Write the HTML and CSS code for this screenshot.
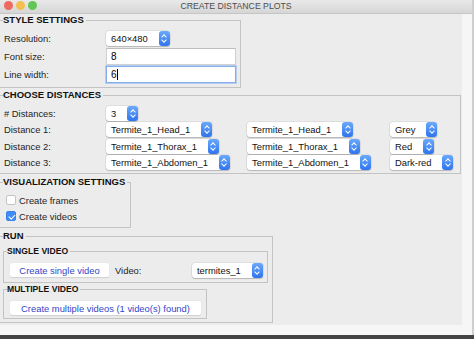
FILE: index.html
```html
<!DOCTYPE html>
<html lang="en">
<head>
    <meta charset="UTF-8">
    <title>Create Distance Plots</title>
    <link rel="stylesheet" href="styles.css">
</head>
<body>
    <div class="window">
        <div class="titlebar">
            <div class="lights">
                <span class="light red"></span>
                <span class="light yellow"></span>
                <span class="light green"></span>
            </div>
            <div class="title">CREATE DISTANCE PLOTS</div>
        </div>
        <div class="body">
            <div class="content">
                <fieldset class="frame style-frame">
                    <legend>STYLE SETTINGS</legend>
                    <div class="row">
                        <label>Resolution:</label>
                        <span class="popup"><span class="value">640×480</span><span class="arrow"></span></span>
                    </div>
                    <div class="row">
                        <label>Font size:</label>
                        <div class="entry">8</div>
                    </div>
                    <div class="row last">
                        <label>Line width:</label>
                        <div class="entry focused">6<span class="caret"></span></div>
                    </div>
                </fieldset>

                <fieldset class="frame dist-frame">
                    <legend>CHOOSE DISTANCES</legend>
                    <div class="dist-grid">
                        <label># Distances:</label>
                        <span class="cell"><span class="popup"><span class="value">3</span><span class="arrow"></span></span></span>
                        <span></span>
                        <span></span>

                        <label>Distance 1:</label>
                        <span class="cell"><span class="popup"><span class="value">Termite_1_Head_1</span><span class="arrow"></span></span></span>
                        <span class="cell"><span class="popup"><span class="value">Termite_1_Head_1</span><span class="arrow"></span></span></span>
                        <span class="cell"><span class="popup"><span class="value">Grey</span><span class="arrow"></span></span></span>

                        <label>Distance 2:</label>
                        <span class="cell"><span class="popup"><span class="value">Termite_1_Thorax_1</span><span class="arrow"></span></span></span>
                        <span class="cell"><span class="popup"><span class="value">Termite_1_Thorax_1</span><span class="arrow"></span></span></span>
                        <span class="cell"><span class="popup"><span class="value">Red</span><span class="arrow"></span></span></span>

                        <label>Distance 3:</label>
                        <span class="cell"><span class="popup"><span class="value">Termite_1_Abdomen_1</span><span class="arrow"></span></span></span>
                        <span class="cell"><span class="popup"><span class="value">Termite_1_Abdomen_1</span><span class="arrow"></span></span></span>
                        <span class="cell"><span class="popup"><span class="value">Dark-red</span><span class="arrow"></span></span></span>
                    </div>
                </fieldset>

                <fieldset class="frame viz-frame">
                    <legend>VISUALIZATION SETTINGS</legend>
                    <div class="check-row"><span class="check"></span>Create frames</div>
                    <div class="check-row"><span class="check checked"></span>Create videos</div>
                </fieldset>

                <fieldset class="frame run-frame">
                    <legend>RUN</legend>
                    <fieldset class="frame sub single">
                        <legend>SINGLE VIDEO</legend>
                        <div class="single-row">
                            <button class="btn single-btn">Create single video</button>
                            <label class="video-label">Video:</label>
                            <span class="popup"><span class="value">termites_1</span><span class="arrow"></span></span>
                        </div>
                    </fieldset>
                    <fieldset class="frame sub multiple">
                        <legend>MULTIPLE VIDEO</legend>
                        <button class="btn multi-btn">Create multiple videos (1 video(s) found)</button>
                    </fieldset>
                </fieldset>
            </div>
            <div class="edge"></div>
        </div>
        <div class="foot"></div>
    </div>
</body>
</html>
```

FILE: styles.css
```css
html {
    background: linear-gradient(#cfcfcf 335px, #454545 335px);
}
body {
    margin: 0;
    width: 474px;
    height: 339px;
    overflow: hidden;
    font-family: 'Liberation Sans', Arial, sans-serif;
    font-size: 9.4px;
    color: #1e1e1e;
}
.window {
    width: 472px;
    height: 335px;
    background-color: #ececec;
    display: flex;
    flex-direction: column;
}
.titlebar {
    flex-shrink: 0;
    height: 13px;
    border-bottom: 1px solid #c6c6c6;
    background: linear-gradient(#e9e9e9, #d6d6d6);
    display: grid;
    grid-template-columns: 1fr auto 1fr;
    align-items: center;
}
.lights {
    display: flex;
    gap: 3px;
    padding-left: 4px;
    margin-top: -3px;
}
.light {
    display: block;
    width: 9px;
    height: 9px;
    border-radius: 50%;
}
.red { background-color: #ee6b60; }
.yellow { background-color: #f4be50; }
.green { background-color: #62c655; }
.title {
    font-size: 8.7px;
    color: #4d4d4d;
    margin-top: -1px;
}
.body {
    flex: 1;
    min-height: 0;
    display: flex;
    overflow: hidden;
}
.content {
    width: 462px;
}
.edge {
    width: 10px;
    background-color: #f6f6f6;
}
.foot {
    flex-shrink: 0;
    height: 10px;
    background-color: #f6f6f6;
}

/* label frames */
.frame {
    margin: 0;
    padding: 0;
    min-width: 0;
    border: 1px solid #c3c3c3;
    border-left: none;
    box-sizing: border-box;
}
.frame legend {
    font-weight: bold;
    font-size: 9.5px;
    line-height: 12px;
    color: #111111;
    white-space: nowrap;
    padding: 0 2px 0 0;
    margin-left: 0;
}
.sub {
    border-left: 1px solid #c3c3c3;
}
.sub legend {
    font-size: 8.6px;
}

/* style settings */
.style-frame {
    width: 241px;
    padding: 3px 0 3px 4px;
}
.style-frame legend {
    margin-left: -1px;
}
.row {
    display: flex;
    align-items: center;
    height: 18px;
}
.row.last {
    height: 19px;
}
.row label {
    width: 102px;
}
.entry {
    width: 130px;
    height: 17px;
    box-sizing: border-box;
    background-color: #ffffff;
    border: 1px solid #cfcfcf;
    border-top-color: #bdbdbd;
    padding-left: 4px;
    display: flex;
    align-items: center;
    font-size: 10px;
    color: #000000;
}
.entry.focused {
    border-color: #86acea;
    box-shadow: 0 0 0 1px #b4cdf3;
}
.caret {
    width: 1px;
    height: 11px;
    background-color: #000000;
}

/* popup menus */
.popup {
    display: inline-flex;
    align-items: stretch;
    height: 15px;
    background-color: #ffffff;
    border-radius: 3px;
    box-shadow: 0 0 0 0.5px rgba(0, 0, 0, 0.12), 0 1px 1px rgba(0, 0, 0, 0.18);
}
.popup .value {
    display: flex;
    align-items: center;
    padding: 0 11px 0 5px;
    color: #111111;
}
.arrow {
    position: relative;
    width: 11px;
    border-radius: 3px;
    background: linear-gradient(#6aa9fb, #2f74ee);
}
.arrow::before,
.arrow::after {
    content: "";
    position: absolute;
    left: 3.5px;
    width: 3px;
    height: 3px;
    border: solid #ffffff;
    border-width: 1.2px 0 0 1.2px;
}
.arrow::before {
    top: 4px;
    transform: rotate(45deg);
}
.arrow::after {
    bottom: 4px;
    transform: rotate(225deg);
}

/* choose distances */
.dist-frame {
    width: 461px;
    margin-top: 1px;
    padding: 4px 0 2px 4px;
}
.dist-frame legend {
    margin-left: -1px;
}
.dist-grid {
    display: grid;
    grid-template-columns: 102px 141px 143px auto;
    grid-auto-rows: 16.5px;
    align-items: center;
}
.cell {
    display: flex;
}

/* visualization settings */
.viz-frame {
    width: 131px;
    margin-top: 2px;
    padding: 4px 0 3px 6px;
}
.viz-frame legend {
    margin-left: -3px;
}
.check-row {
    display: flex;
    align-items: center;
    gap: 3px;
    height: 16px;
}
.check {
    width: 10px;
    height: 10px;
    box-sizing: border-box;
    border-radius: 2px;
    background-color: #ffffff;
    border: 1px solid #c4c4c4;
    position: relative;
}
.check.checked {
    background-color: #3f8cf6;
    border-color: #3a82ea;
}
.check.checked::after {
    content: "";
    position: absolute;
    left: 2.5px;
    top: 0.5px;
    width: 2.5px;
    height: 5px;
    border: solid #ffffff;
    border-width: 0 1.3px 1.3px 0;
    transform: rotate(45deg);
}

/* run */
.run-frame {
    width: 273px;
    margin-top: 2px;
    padding: 3px 0 3px 3px;
}
.single {
    width: 265px;
    padding: 4px 0 3px 6px;
}
.sub legend {
    margin-left: -3px;
}
.single-row {
    display: flex;
    align-items: center;
    height: 18px;
}
.btn {
    font-family: inherit;
    font-size: 9.4px;
    color: #3346c8;
    background-color: #ffffff;
    border: none;
    border-radius: 2px;
    height: 14px;
    padding: 0;
    box-shadow: 0 0.5px 1px rgba(0, 0, 0, 0.12);
}
.single-btn {
    width: 99px;
}
.video-label {
    width: 77px;
    margin-left: 6px;
}
.multiple {
    width: 204px;
    padding: 6px 0 3px 6px;
}
.multi-btn {
    width: 191px;
}
```
